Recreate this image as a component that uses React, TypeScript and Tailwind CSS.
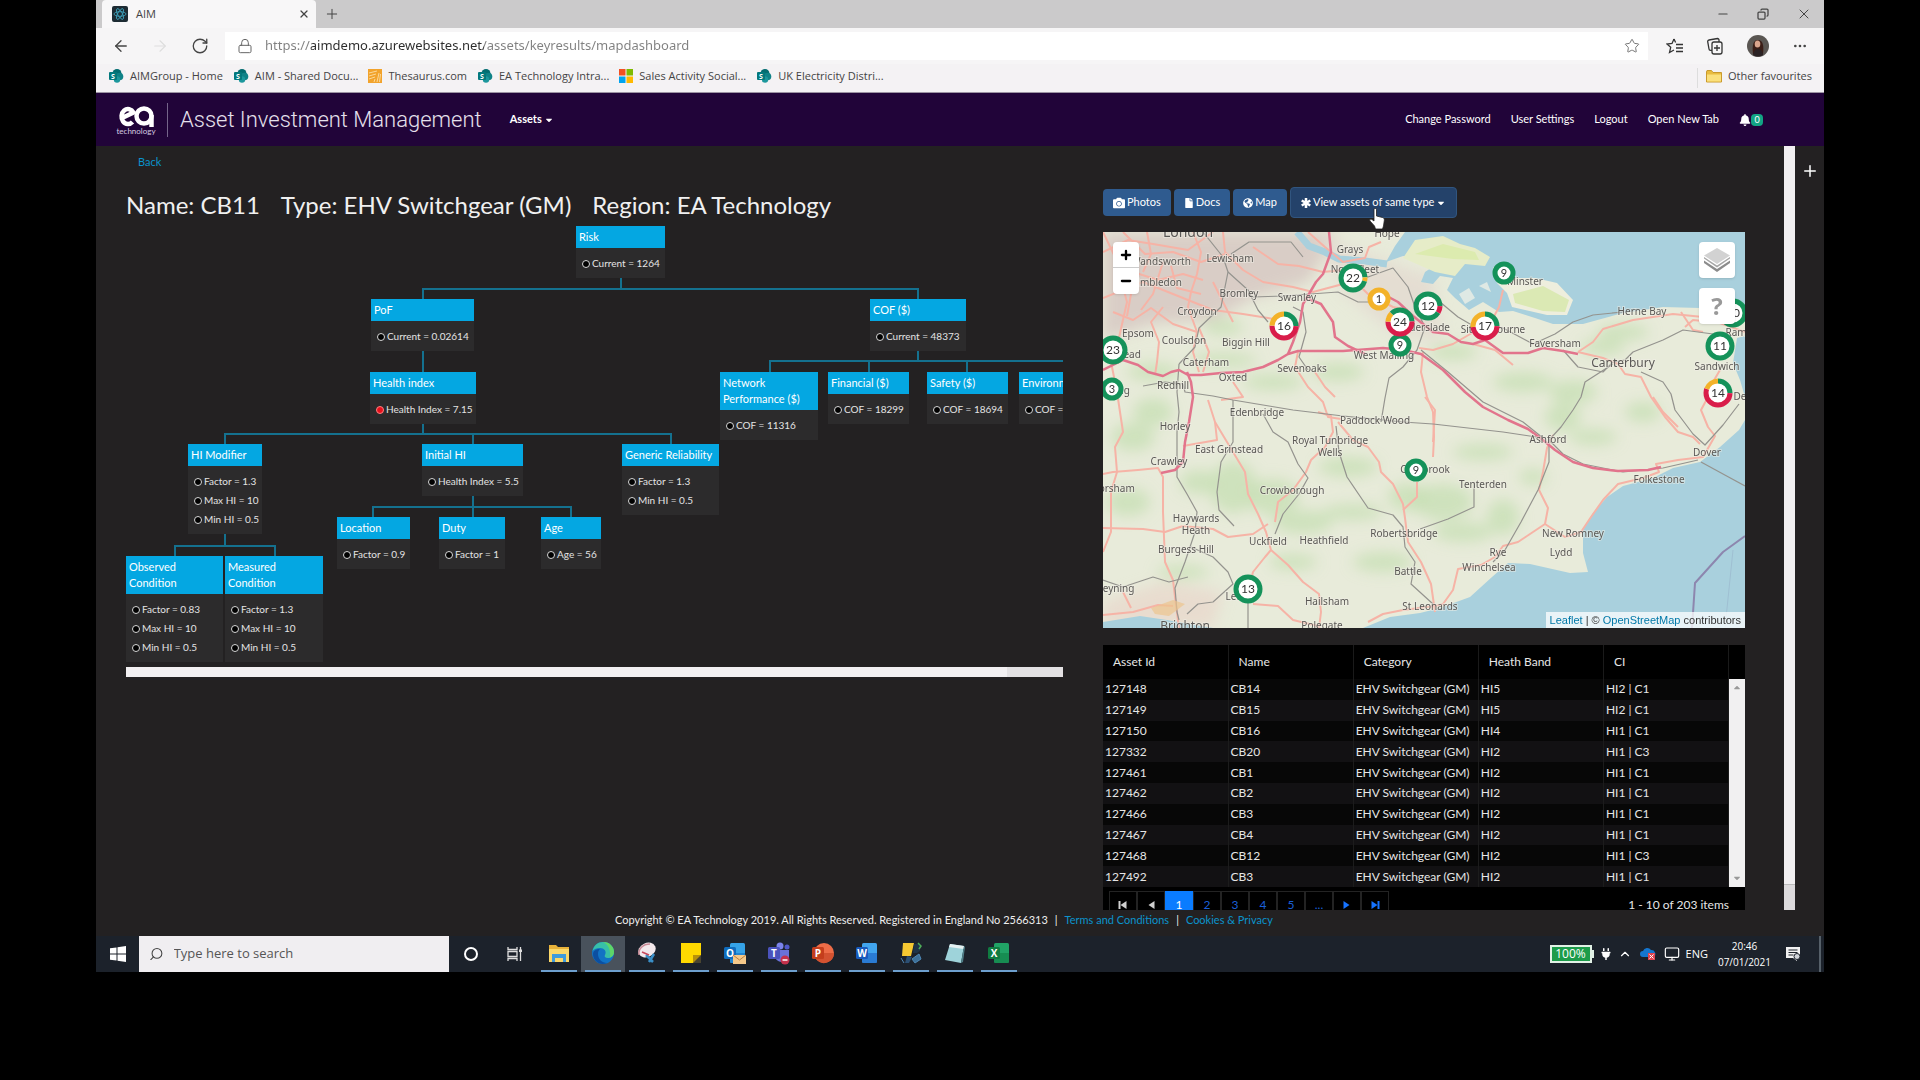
import type { ReactNode } from 'react';
import {
  ArrowLeft,
  ArrowRight,
  ChevronUp,
  Copy,
  Lock,
  Minus,
  Monitor,
  MoreHorizontal,
  Plus,
  RotateCw,
  Search,
  Star,
  X,
} from 'lucide-react';
import { FaBell, FaCamera, FaCaretDown, FaFile, FaGlobeAmericas, FaPlug } from 'react-icons/fa';

/* ---------- data ---------- */

type TreeNode = { title: string; x: number; y: number; w: number; rows: string[]; alert?: boolean };

const treeNodes: TreeNode[] = [
  { title: 'Risk', x: 450, y: 3, w: 89, rows: ['Current = 1264'] },
  { title: 'PoF', x: 245, y: 76, w: 103, rows: ['Current = 0.02614'] },
  { title: 'COF ($)', x: 744, y: 76, w: 96, rows: ['Current = 48373'] },
  { title: 'Health index', x: 244, y: 149, w: 106, rows: ['Health Index = 7.15'], alert: true },
  { title: 'Network Performance ($)', x: 594, y: 149, w: 98, rows: ['COF = 11316'] },
  { title: 'Financial ($)', x: 702, y: 149, w: 81, rows: ['COF = 18299'] },
  { title: 'Safety ($)', x: 801, y: 149, w: 81, rows: ['COF = 18694'] },
  { title: 'Environmental ($)', x: 893, y: 149, w: 104, rows: ['COF = 64'] },
  { title: 'HI Modifier', x: 62, y: 221, w: 74, rows: ['Factor = 1.3', 'Max HI = 10', 'Min HI = 0.5'] },
  { title: 'Initial HI', x: 296, y: 221, w: 101, rows: ['Health Index = 5.5'] },
  { title: 'Generic Reliability', x: 496, y: 221, w: 97, rows: ['Factor = 1.3', 'Min HI = 0.5'] },
  { title: 'Location', x: 211, y: 294, w: 73, rows: ['Factor = 0.9'] },
  { title: 'Duty', x: 313, y: 294, w: 66, rows: ['Factor = 1'] },
  { title: 'Age', x: 415, y: 294, w: 60, rows: ['Age = 56'] },
  { title: 'Observed Condition', x: 0, y: 333, w: 97, rows: ['Factor = 0.83', 'Max HI = 10', 'Min HI = 0.5'] },
  { title: 'Measured Condition', x: 99, y: 333, w: 98, rows: ['Factor = 1.3', 'Max HI = 10', 'Min HI = 0.5'] },
];

const treeLinks = [
  'M495 55V66M297 76V66H792V76',
  'M297 127V149',
  'M792 127V138M644 149V138H1000M743 138V149M841 138V149',
  'M297 200V211M99 221V211H545V221M347 211V221',
  'M347 273V294M247 294V284H445V294',
  'M99 311V323M49 333V323H149V333',
];

const assets = [
  ['127148', 'CB14', 'EHV Switchgear (GM)', 'HI5', 'HI2 | C1'],
  ['127149', 'CB15', 'EHV Switchgear (GM)', 'HI5', 'HI2 | C1'],
  ['127150', 'CB16', 'EHV Switchgear (GM)', 'HI4', 'HI1 | C1'],
  ['127332', 'CB20', 'EHV Switchgear (GM)', 'HI2', 'HI1 | C3'],
  ['127461', 'CB1', 'EHV Switchgear (GM)', 'HI2', 'HI1 | C1'],
  ['127462', 'CB2', 'EHV Switchgear (GM)', 'HI2', 'HI1 | C1'],
  ['127466', 'CB3', 'EHV Switchgear (GM)', 'HI2', 'HI1 | C1'],
  ['127467', 'CB4', 'EHV Switchgear (GM)', 'HI2', 'HI1 | C1'],
  ['127468', 'CB12', 'EHV Switchgear (GM)', 'HI2', 'HI1 | C3'],
  ['127492', 'CB3', 'EHV Switchgear (GM)', 'HI2', 'HI1 | C1'],
];

type Place = [name: string, x: number, y: number, size?: number];

const places: Place[] = [
  ['London', 85, 5, 14],
  ['Lewisham', 127, 30],
  ['Wandsworth', 58, 33],
  ['Wimbledon', 52, 54],
  ['Bromley', 136, 65],
  ['Swanley', 194, 69],
  ['Croydon', 94, 83],
  ['Epsom', 35, 105],
  ['Coulsdon', 81, 112],
  ['Biggin Hill', 143, 114],
  ['Leatherhead', 8, 126],
  ['Caterham', 103, 134],
  ['Oxted', 130, 149],
  ['Redhill', 70, 157],
  ['Dorking', 8, 162],
  ['Sevenoaks', 199, 140],
  ['West Malling', 281, 127],
  ['Grays', 247, 21],
  ['Northfleet', 252, 41],
  ['Hope', 284, 5],
  ['Walderslade', 318, 99],
  ['Minster', 422, 53],
  ['Sittingbourne', 390, 101],
  ['Faversham', 452, 115],
  ['Herne Bay', 539, 83],
  ['Canterbury', 520, 135, 12],
  ['Ramsgate', 646, 104],
  ['Sandwich', 614, 138],
  ['Deal', 641, 168],
  ['Edenbridge', 154, 184],
  ['Horley', 72, 198],
  ['East Grinstead', 126, 221],
  ['Crawley', 66, 233],
  ['Horsham', 10, 260],
  ['Paddock Wood', 272, 192],
  ['Royal Tunbridge', 227, 212],
  ['Wells', 227, 224],
  ['Cranbrook', 322, 241],
  ['Crowborough', 189, 262],
  ['Haywards', 93, 290],
  ['Heath', 93, 302],
  ['Uckfield', 165, 313],
  ['Heathfield', 221, 312],
  ['Burgess Hill', 83, 321],
  ['Robertsbridge', 301, 305],
  ['Battle', 305, 343],
  ['Steyning', 11, 360],
  ['Lewes', 137, 368],
  ['Hailsham', 224, 373],
  ['Polegate', 219, 397],
  ['Brighton', 82, 398, 12],
  ['St Leonards', 327, 378],
  ['Ashford', 445, 211],
  ['Tenterden', 380, 256],
  ['Dover', 604, 224],
  ['Folkestone', 556, 251],
  ['New Romney', 470, 305],
  ['Lydd', 458, 324],
  ['Rye', 395, 324],
  ['Winchelsea', 386, 339],
];

const GREEN = '#15925a';
const AMBER = '#f3b229';
const RED = '#d91d4a';

// share of each colour round the ring, clockwise from the top
type Slice = [color: string, share: number];
type Cluster = { n: string; x: number; y: number; r: number; ring: Slice[] };

const clusters: Cluster[] = [
  { n: '22', x: 250, y: 46, r: 15, ring: [[GREEN, 0.24], [AMBER, 0.05], [GREEN, 0.71]] },
  { n: '1', x: 276, y: 67, r: 12, ring: [[AMBER, 1]] },
  { n: '12', x: 325, y: 74, r: 15, ring: [[GREEN, 0.25], [RED, 0.09], [GREEN, 0.66]] },
  { n: '9', x: 297, y: 113, r: 12, ring: [[GREEN, 1]] },
  { n: '24', x: 297, y: 90, r: 15, ring: [[GREEN, 0.24], [RED, 0.51], [AMBER, 0.12], [GREEN, 0.13]] },
  { n: '16', x: 181, y: 94, r: 15, ring: [[GREEN, 0.25], [RED, 0.5], [AMBER, 0.25]] },
  { n: '23', x: 10, y: 118, r: 15, ring: [[GREEN, 1]] },
  { n: '3', x: 9, y: 157, r: 12, ring: [[GREEN, 1]] },
  { n: '9', x: 401, y: 41, r: 12, ring: [[GREEN, 1]] },
  { n: '17', x: 382, y: 94, r: 15, ring: [[GREEN, 0.25], [RED, 0.48], [AMBER, 0.27]] },
  { n: '10', x: 630, y: 81, r: 15, ring: [[GREEN, 1]] },
  { n: '11', x: 617, y: 114, r: 15, ring: [[GREEN, 1]] },
  { n: '14', x: 615, y: 161, r: 15, ring: [[GREEN, 0.25], [RED, 0.55], [AMBER, 0.2]] },
  { n: '13', x: 145, y: 357, r: 15, ring: [[GREEN, 1]] },
  { n: '9', x: 313, y: 238, r: 12, ring: [[GREEN, 1]] },
];

const motorways = [
  'M0 138L20 128L35 133L45 140L60 144L68 140L76 138L85 143L98 143L118 141L140 140L160 135L175 128L185 122L195 119L240 119L280 116L300 118L318 122L340 138L362 160L380 175L405 188L425 197L440 208L452 218L470 230L490 236L515 239L545 238L558 235',
  'M185 122L190 110L197 90L200 72L206 62L213 50L220 42L228 20L226 0',
  'M206 67L218 72L230 90L232 105L245 114L262 122',
  'M84 140L88 150L90 165L86 190L82 210L80 230L72 238L58 241',
  'M280 62L295 70L310 84L330 100L345 102L358 110L370 112L382 108L400 121L425 121L440 116L460 119L475 122',
];

const primaries = [
  'M0 242L10 240L35 238L55 236L60 245L60 280L62 330L70 348L72 365L76 396',
  'M0 0L12 25L24 70L15 110L8 130L14 160L20 200L12 215L14 240L8 260L8 300L0 320',
  'M0 296L40 297L62 300L80 294L110 297L125 305L150 302L165 292',
  'M105 168L112 190L114 208L80 214',
  'M112 190L130 220L142 240L145 262L155 282L163 300L168 318L185 333L200 350L216 362L218 380L216 396',
  'M172 290L175 270L190 258L203 240L208 228L222 215L230 200L228 184L215 180',
  'M195 120L192 135L205 155L220 170L225 185L238 187',
  'M235 190L250 208L265 215L276 230L278 240L290 252L300 272L302 286L305 310L318 330L328 352L332 380',
  'M314 250L314 265L300 278',
  'M320 120L318 140L324 165L330 180L331 205L330 225',
  'M0 66L40 50L80 66L110 78L140 82L165 86L176 88',
  'M60 75L48 90L56 110L54 130L52 143',
  'M90 0L98 20L94 42L88 60L85 75L94 100L90 120L96 140',
  'M120 0L122 20L140 38L160 50L190 55L210 60L240 52L262 55',
  'M150 15L175 32L196 34L220 40L240 38L265 62L290 75L305 78',
  'M205 0L222 15L240 30L262 26L266 15L278 10',
  'M0 20L25 8L50 12L85 18L110 0M20 0L42 22L70 20L98 30L122 22',
  'M30 40L55 48L80 42L100 48M60 30L50 62L38 78',
  'M10 80L30 88L48 76L70 92L94 100M68 34L74 56L98 62M110 50L118 66L130 90M12 48L28 62L24 84M44 0L48 22L40 40',
  'M400 58L396 75L388 90L350 112L330 118L316 116',
  'M475 120L490 110L500 97L530 88L570 82L600 85L642 100',
  'M475 120L500 126L515 132L522 142L538 145L548 165L562 185L575 200L590 205L597 212',
  'M582 95L590 88L610 90M578 80L590 98L600 100',
  'M617 138L610 150L605 165L598 178L605 195L612 204L600 225L575 228L553 232L556 240L540 246L515 252L500 268L488 285L478 300L462 305L442 292L430 300L415 310L400 314L392 325L378 333L355 337L350 358L340 372L332 374L300 378L280 382L265 390',
  'M550 165L560 180L575 195',
  'M450 203L444 216L440 240L436 258L445 276L442 292',
  'M330 210L332 178L322 165',
  'M150 372L175 374L190 388L215 394',
  'M145 360L150 340L162 325L168 318',
  'M0 383L30 380L55 373L70 374',
  'M20 360L28 376M100 140L106 120L96 96M130 150L140 165L118 168',
  'M212 140L222 155L232 165M370 112L392 118L410 133',
];

const railways = [
  'M76 132L74 160L76 180L74 200L74 245L84 262L94 280L92 300L82 330L72 356L74 380L76 388',
  'M88 315L110 325L125 340L130 352L110 370L95 372L84 382',
  'M40 154L62 150L80 152L82 160L110 164L130 168L190 178L240 184L300 190L330 192L400 200L440 206',
  'M130 168L130 210L118 230L114 260L116 278L131 294',
  'M160 182L170 200L185 210L195 232L205 246L196 262L180 282L172 302',
  'M233 194L236 220L244 245L265 276L290 283L300 295L302 315L312 330L308 352L330 372',
  'M100 0L120 25L125 40L118 75L96 96L92 115L76 132',
  'M125 40L145 58L155 78L165 90',
  'M128 22L146 10L188 10L200 25M150 65L180 64L235 60L255 70L280 70',
  'M240 42L265 45L290 36L305 55L312 75M190 75L200 80L203 100L196 125L205 138',
  'M312 75L322 95L314 118L300 135L286 146L282 166L278 190',
  'M337 70L355 85L367 92L400 96L430 112L452 102L470 90L490 83L520 80',
  'M460 118L475 135L500 140L510 130L522 128L530 120L560 108L580 98L610 102',
  'M510 132L482 150L478 165L470 178L458 195L446 208L446 230L435 258L418 290L402 318L390 330',
  'M538 140L560 150L568 162L572 178L590 202L602 213L620 193L636 172',
  'M446 208L460 222L480 232L520 240L560 236L595 228',
  'M371 250L371 275L345 287L317 297',
  'M440 206L420 190L380 170L345 140L318 118',
  'M145 365L145 396M0 348L20 355L50 345L66 350L85 345',
  'M598 230L620 242L642 254',
];

const woods: [number, number, number, number][] = [
  [120, 128, 34, 7],
  [170, 150, 30, 8],
  [50, 140, 26, 9],
  [235, 140, 26, 9],
  [420, 150, 30, 10],
  [470, 160, 24, 12],
  [520, 100, 26, 8],
  [500, 115, 22, 8],
  [130, 255, 24, 26],
  [170, 265, 26, 18],
  [95, 250, 18, 12],
  [245, 235, 30, 10],
  [305, 265, 20, 14],
  [340, 270, 30, 18],
  [360, 300, 30, 10],
  [280, 330, 30, 10],
  [400, 285, 16, 18],
  [25, 270, 22, 14],
  [50, 180, 20, 14],
  [350, 120, 24, 8],
  [460, 185, 18, 14],
  [540, 180, 18, 10],
  [430, 245, 14, 8],
  [190, 330, 24, 8],
  [80, 340, 26, 7],
  [250, 280, 30, 8],
  [30, 205, 22, 14],
  [200, 290, 30, 12],
  [380, 220, 30, 8],
  [120, 95, 20, 8],
  [490, 205, 24, 8],
];

const bookmarks: [string, 'sharepoint' | 'thesaurus' | 'microsoft'][] = [
  ['AIMGroup - Home', 'sharepoint'],
  ['AIM - Shared Docu...', 'sharepoint'],
  ['Thesaurus.com', 'thesaurus'],
  ['EA Technology Intra...', 'sharepoint'],
  ['Sales Activity Social...', 'microsoft'],
  ['UK Electricity Distri...', 'sharepoint'],
];

/* ---------- browser chrome ---------- */

function BookmarkIcon({ kind }: { kind: string }) {
  if (kind === 'microsoft') {
    return (
      <svg viewBox="0 0 14 14" className="size-3.5">
        <path fill="#f25022" d="M0 0h6.5v6.5H0z" />
        <path fill="#7fba00" d="M7.5 0H14v6.5H7.5z" />
        <path fill="#00a4ef" d="M0 7.5h6.5V14H0z" />
        <path fill="#ffb900" d="M7.5 7.5H14V14H7.5z" />
      </svg>
    );
  }
  if (kind === 'thesaurus') {
    return (
      <svg viewBox="0 0 14 14" className="size-3.5">
        <path fill="#f2a32c" d="M0 0h14v14H0z" />
        <path stroke="#fbd99a" fill="none" d="M1 4l8-2M1 7l7-2M1 10l6-2M9 13l2-9M11.500 13l1-8M6 13l1-3" />
      </svg>
    );
  }
  return (
    <svg viewBox="0 0 16 14" className="h-3.5 w-4">
      <circle cx="9" cy="4.500" r="4.500" fill="#036c70" />
      <circle cx="11.500" cy="7.500" r="3.800" fill="#0f8287" />
      <circle cx="9" cy="10.500" r="3.200" fill="#1c979c" />
      <rect x="1" y="3" width="8" height="8" rx="1" fill="#03787c" />
      <text x="5" y="9.500" fontSize="7" fontWeight="bold" fill="#fff" textAnchor="middle">
        S
      </text>
    </svg>
  );
}

function BrowserChrome() {
  return (
    <header className="font-['Open_Sans',sans-serif] text-[#444]">
      <div className="flex h-7 items-stretch justify-between bg-[#cbcacb]">
        <div className="flex items-center">
          <div className="ml-1.5 flex h-full w-[214px] items-center rounded-t bg-[#f8f7f8] pr-1.5 pl-2.5">
            <svg viewBox="0 0 16 16" className="size-4">
              <rect width="16" height="16" rx="2" fill="#1d2b33" />
              <g fill="none" stroke="#3fa9c4" strokeWidth=".8">
                <ellipse cx="8" cy="8" rx="6" ry="2.300" />
                <ellipse cx="8" cy="8" rx="6" ry="2.300" transform="rotate(60 8 8)" />
                <ellipse cx="8" cy="8" rx="6" ry="2.300" transform="rotate(120 8 8)" />
              </g>
            </svg>
            <span className="ml-2 flex-1 text-[11px]">AIM</span>
            <button aria-label="Close tab">
              <X className="size-3" strokeWidth={2.5} />
            </button>
          </div>
          <button aria-label="New tab" className="ml-2">
            <Plus className="size-4" strokeWidth={1.5} />
          </button>
        </div>
        <div className="flex items-center gap-[27px] pr-3">
          <button aria-label="Minimize">
            <Minus className="size-3.5" strokeWidth={2} />
          </button>
          <button aria-label="Restore">
            <Copy className="size-3 -scale-x-100" strokeWidth={2.5} />
          </button>
          <button aria-label="Close">
            <X className="size-4" strokeWidth={1.5} />
          </button>
        </div>
      </div>

      <div className="flex h-9 items-center bg-[#f6f5f6] px-4">
        <button aria-label="Back">
          <ArrowLeft className="size-[18px]" strokeWidth={1.75} />
        </button>
        <button aria-label="Forward" className="ml-[21px] text-[#ddd]">
          <ArrowRight className="size-[18px]" strokeWidth={1.5} />
        </button>
        <button aria-label="Refresh" className="ml-[22px]">
          <RotateCw className="size-[18px]" strokeWidth={1.75} />
        </button>
        <div className="ml-4 flex h-7 flex-1 items-center bg-white pr-2 pl-3">
          <Lock className="size-4 text-[#666]" strokeWidth={1.5} />
          <input
            aria-label="Address"
            defaultValue="https://aimdemo.azurewebsites.net/assets/keyresults/mapdashboard"
            className="ml-3 flex-1 bg-[linear-gradient(90deg,#808080_46px,#2c2c2c_46px,#2c2c2c_219px,#808080_219px)] bg-clip-text font-['Noto_Sans',sans-serif] text-[13px] text-transparent outline-none"
          />
          <Star className="size-4 text-[#777]" strokeWidth={1.5} />
        </div>
        <div className="ml-[18px] flex items-center gap-[22px]">
          <button aria-label="Favourites">
            <svg viewBox="0 0 18 16" className="h-4 w-[18px] fill-none stroke-[#333]" strokeWidth="1.300">
              <path d="M8 1L6 5.500 1 6l3.700 3.300L3.500 14.500 8 12M8 1l1.600 3.500" />
              <path d="M10 6.500h7M10 10h7M10 13.500h7" />
            </svg>
          </button>
          <button aria-label="Collections">
            <svg viewBox="0 0 18 18" className="size-[18px] fill-none stroke-[#333]" strokeWidth="1.300">
              <rect x="6" y="5" width="10" height="12" rx="2" />
              <path d="M13 5V3a1.500 1.500 0 00-1.500-1.500L3 3a1.500 1.500 0 00-1.300 1.700L3 12a1.500 1.500 0 001.500 1.400H6M11 8v6M8 11h6" />
            </svg>
          </button>
          <button aria-label="Profile">
            <svg viewBox="0 0 24 24" className="size-6">
              <circle cx="12" cy="12" r="11" fill="#5a5652" />
              <path d="M7 20c-1-8 0-14 5-14s6 6 5 14z" fill="#3a1d16" />
              <ellipse cx="11.500" cy="10" rx="2.800" ry="3.600" fill="#d9a48c" />
              <path d="M7 21c1-5 3-6 5-6s5 2 5 6c-3 2-7 2-10 0z" fill="#2a2224" />
            </svg>
          </button>
          <button aria-label="Settings and more">
            <MoreHorizontal className="size-4" strokeWidth={2} />
          </button>
        </div>
      </div>

      <div className="flex h-7 items-center justify-between bg-[#f4f2f4] px-3 text-[11px] leading-4">
        <nav className="flex items-center gap-2.5 pb-1">
          {bookmarks.map(([label, kind]) => (
            <a key={label} href="#" className="flex items-center gap-1.5">
              <BookmarkIcon kind={kind} />
              {label}
            </a>
          ))}
        </nav>
        <button className="flex items-center gap-1.5 border-l border-[#ddd] pb-1 pl-2">
          <svg viewBox="0 0 16 13" className="h-[13px] w-4">
            <path d="M.5 2V12h15V2.500H7L5.500.5H1z" fill="#e9bc3f" stroke="#c99a2e" />
            <path d="M1 4.500h14V11.500H1z" fill="#fbe07c" />
          </svg>
          Other favourites
        </button>
      </div>
    </header>
  );
}

/* ---------- application ---------- */

function AppHeader() {
  return (
    <div className="flex h-[54px] items-center justify-between border-t border-[#9c94a3] bg-[#210439] pr-[61px] pl-[22px] text-[11px] text-white">
      <div className="flex items-center">
        <a href="#" aria-label="EA Technology" className="flex w-9 flex-col items-center">
          <svg viewBox="0 0 36 22" className="h-[22px] w-9 fill-none stroke-white" strokeWidth="4.500">
            <path d="M3 13.500L15.500 7.500A6.500 7.500 0 1 0 14.500 17" />
            <circle cx="26" cy="11" r="7.500" />
            <path d="M33.500 10V22" />
          </svg>
          <span className="text-[8px] leading-[8px] text-[#d5cbe0]">technology</span>
        </a>
        <span className="ml-[13px] h-[34px] w-px bg-[#75658a]" />
        <h1 className="ml-3 font-['Roboto',sans-serif] text-[22px] font-light text-[#e6e0ec]">
          Asset Investment Management
        </h1>
        <button className="ml-7 flex items-center gap-0.5 font-bold">
          Assets <FaCaretDown className="size-2.5" />
        </button>
      </div>
      <nav className="flex items-center gap-5">
        <a href="#">Change Password</a>
        <a href="#">User Settings</a>
        <a href="#">Logout</a>
        <a href="#">Open New Tab</a>
        <a href="#" className="flex items-center" aria-label="Notifications">
          <FaBell className="size-3" />
          <span className="flex h-3 w-3 items-center justify-center rounded-sm bg-[#12a584] text-[9px] leading-3">
            0
          </span>
        </a>
      </nav>
    </div>
  );
}

function NodeCard({ node }: { node: TreeNode }) {
  return (
    <div className="absolute text-[#e4e4e4]" style={{ left: node.x, top: node.y, width: node.w }}>
      <div className="bg-[#04a7e2] py-[3px] pl-[3px] text-[11px] leading-4 text-white">{node.title}</div>
      <ul className="bg-[#2c2b2c] pt-1.5 pb-[5px] pl-1.5 text-[10px]">
        {node.rows.map((row) => (
          <li key={row} className="flex h-[19px] items-center gap-0.5 whitespace-nowrap">
            <span
              className={`size-2 shrink-0 rounded-full border ${
                node.alert ? 'border-[#ff8080] bg-[#e8101c]' : 'border-[#d8d8d8] bg-black'
              }`}
            />
            {row}
          </li>
        ))}
      </ul>
    </div>
  );
}

function AssetTree() {
  return (
    <section>
      <div className="relative h-[444px] overflow-hidden">
        <svg className="absolute top-0 left-0 h-full w-full fill-none stroke-[#14718f]" strokeWidth="2">
          {treeLinks.map((d) => (
            <path key={d} d={d} />
          ))}
        </svg>
        {treeNodes.map((node) => (
          <NodeCard key={node.title} node={node} />
        ))}
      </div>
      <div className="h-2.5 bg-[#e3e1e3]">
        <div className="h-full w-[94%] bg-[#f2f0f2]" />
      </div>
    </section>
  );
}

function ClusterMarker({ n, x, y, r, ring }: Cluster) {
  const mid = r - 3;
  const length = 2 * Math.PI * mid;
  let start = 0;
  return (
    <g>
      <circle cx={x} cy={y} r={r - 1} fill="#fff" />
      {ring.map(([color, share], i) => {
        const offset = start;
        start += share;
        return (
          <circle
            key={i}
            cx={x}
            cy={y}
            r={mid}
            fill="none"
            stroke={color}
            strokeWidth="5"
            strokeDasharray={`${share * length} ${length}`}
            strokeDashoffset={-offset * length}
            transform={`rotate(-90 ${x} ${y})`}
          />
        );
      })}
      <text x={x} y={y + 4} textAnchor="middle" fontSize={r > 12 ? 12 : 11} fill="#333">
        {n}
      </text>
    </g>
  );
}

function MapView() {
  return (
    <div className="relative mt-3.5 h-[396px] overflow-hidden">
      <svg
        viewBox="0 0 642 396"
        preserveAspectRatio="xMidYMid slice"
        className="h-full w-full font-['Lato',sans-serif]">
        <rect width="642" height="396" fill="#e8ebda" />
        <defs>
          <filter id="soft" x="-20%" y="-20%" width="140%" height="140%">
            <feGaussianBlur stdDeviation="7" />
          </filter>
        </defs>
        <g filter="url(#soft)">
          <path d="M0 0H235L205 50 150 66 110 88 50 92 0 108z" fill="#d9cdc6" />
          <path d="M215 5L330 45 340 110 290 100 240 60z" fill="#e4ddd2" />
          {woods.map(([cx, cy, rx, ry]) => (
            <ellipse key={`${cx}-${cy}`} cx={cx} cy={cy} rx={rx} ry={ry} fill="#c3deb0" opacity=".7" />
          ))}
          <path d="M0 370L60 350 120 360 110 396 0 396z" fill="#e8dccf" />
        </g>

        {/* sea, estuary and coast */}
        <g fill="#a9d0dd">
          <path d="M283 30L292 14 302 0H642V73L597 76 560 75 520 81 480 92 450 92 432 86 410 79 396 80 380 70 366 78 352 66 344 58 350 46 337 44 330 52 318 50 322 40 337 30 320 26 300 24z" />
          <path d="M642 104L634 106 630 131 637 148 642 165V188L636 198 617 215 597 230 570 236 550 246 520 254 504 265 490 281 480 298 480 321 485 340 467 341 427 332 405 331 389 345 367 365 337 376 317 381 287 385 260 396H642z" />
          <path d="M0 390L37 384 64 388 110 396H0z" />
        </g>
        <path d="M194 0L206 14 222 20 236 27 262 29 284 32" fill="none" stroke="#a9d0dd" strokeWidth="7" />
        <path d="M300 26L312 8 340 4 357 12 372 16 387 25 382 34 362 32 352 44 332 40z" fill="#e6ecc8" />
        <path d="M312 22L340 12 372 20 376 28 350 27z" fill="#dcebaf" />
        <path d="M390 35L407 46 432 46 454 51 470 68 464 83 444 83 409 75 404 61 394 51z" fill="#eeeedd" />
        <path d="M410 62L440 54 466 68 462 80 440 79 412 71z" fill="#dbe9b4" />
        <path d="M356 62L366 56 372 66 362 72zM376 54L384 50 388 60z" fill="#dfe9e4" />

        <g fill="none" strokeLinejoin="round">
          <g stroke="#f6b3a6" strokeWidth="2">
            {primaries.map((d) => (
              <path key={d} d={d} />
            ))}
          </g>
          <g stroke="#94938e" strokeWidth="1.200">
            {railways.map((d) => (
              <path key={d} d={d} />
            ))}
          </g>
          <g stroke="#e2748c" strokeWidth="2.500">
            {motorways.map((d) => (
              <path key={d} d={d} />
            ))}
          </g>
          <path d="M642 304L620 320 592 351 589 396" stroke="#8d86ae" strokeWidth="2" />
          <path d="M630 318L622 396" stroke="#9fbfd2" />
        </g>
        <path d="M48 376L70 368 82 372 66 384 52 382z" fill="#ecc48e" opacity=".7" />

        <g
          textAnchor="middle"
          fill="#5a5855"
          stroke="#f2f0e8"
          strokeWidth="2"
          strokeOpacity=".5"
          paintOrder="stroke"
          className="font-['Noto_Sans',sans-serif]">
          {places.map(([name, x, y, size = 10]) => (
            <text key={name} x={x} y={y} fontSize={size}>
              {name}
            </text>
          ))}
        </g>
        {clusters.map((c) => (
          <ClusterMarker key={`${c.x}-${c.y}`} {...c} />
        ))}
      </svg>

      <div className="absolute top-2.5 left-2.5 flex w-[26px] flex-col rounded bg-white text-black shadow">
        <button aria-label="Zoom in" className="flex h-[26px] items-center justify-center border-b border-[#ccc]">
          <Plus className="size-3.5" strokeWidth={4} />
        </button>
        <button aria-label="Zoom out" className="flex h-[26px] items-center justify-center">
          <Minus className="size-3.5" strokeWidth={4} />
        </button>
      </div>
      <div className="absolute top-2.5 right-2.5 flex flex-col gap-2.5">
        <button aria-label="Layers" className="flex size-9 items-center justify-center rounded bg-white shadow">
          <svg viewBox="0 0 26 26" className="size-[26px]">
            <path d="M13 25L0 16V13.500L13 22 26 13.500V16z" fill="#8c8c8c" />
            <path d="M13 20.500L0 11.500V10L13 18.500 26 10V11.500z" fill="#a6a6a6" />
            <path d="M13 17L0 8.500 13 1l13 7.500z" fill="#d2d2d2" />
          </svg>
        </button>
        <button className="flex size-9 items-center justify-center rounded bg-white font-['Open_Sans',sans-serif] text-2xl font-bold text-[#999] shadow">
          ?
        </button>
      </div>
      <div className="absolute right-0 bottom-0 bg-white/75 px-1 font-['Liberation_Sans',sans-serif] text-[11px] leading-4 text-[#333]">
        <a href="#" className="text-[#0078a8]">
          Leaflet
        </a>{' '}
        | ©{' '}
        <a href="#" className="text-[#0078a8]">
          OpenStreetMap
        </a>{' '}
        contributors
      </div>
    </div>
  );
}

function Toolbar() {
  const buttonStyle =
    'flex h-[27px] items-center gap-0.5 rounded-sm bg-[#2f5b8f] px-2.5 text-[11px] text-white';

  return (
    <div className="flex h-[31px] items-center gap-[3px]">
      <button className={buttonStyle}>
        <FaCamera className="size-3" /> Photos
      </button>
      <button className={buttonStyle}>
        <FaFile className="size-2.5" /> Docs
      </button>
      <button className={buttonStyle}>
        <FaGlobeAmericas className="size-2.5" /> Map
      </button>
      <div className="relative">
        <button className="flex h-[31px] items-center gap-0.5 rounded-sm border border-[#31557f] bg-[#24426a] px-2.5 text-[11px] text-white">
          <svg viewBox="0 0 10 10" className="size-2.5 stroke-white" strokeWidth="2.500">
            <path d="M5 0V10M0.700 2.500L9.300 7.500M0.700 7.500L9.300 2.500" />
          </svg>
          View assets of same type <FaCaretDown className="size-2.5" />
        </button>
        <svg viewBox="0 0 16 22" className="absolute top-[21px] left-[79px] h-[22px] w-4">
          <path
            d="M5 1.500c0-1.500 2.500-1.500 2.500 0V8l6 1.500c1.500.4 2 1.500 1.800 3L14.500 18l-1 3h-7L5.500 18 1 13c-1-1.500.7-2.600 2-1.500l2 1.500z"
            fill="#fff"
            stroke="#222"
            strokeWidth=".8"
          />
        </svg>
      </div>
    </div>
  );
}

function AssetGrid() {
  const pageStyle = 'flex h-7 w-7 items-center justify-center border border-[#232323] text-[#1a5fd6]';

  return (
    <div className="mt-[17px] bg-black text-xs text-[#e6e6e6]">
      <div className="flex">
        <table className="h-[242px] w-full flex-1 table-fixed border-collapse">
          <thead>
            <tr className="h-[34px]">
              {['Asset Id', 'Name', 'Category', 'Heath Band', 'CI'].map((title) => (
                <th key={title} className="border-r border-[#1a1a1a] pl-2.5 text-left font-normal">
                  {title}
                </th>
              ))}
            </tr>
          </thead>
          <tbody>
            {assets.map((asset, i) => (
              <tr key={asset[0]} className={i % 2 ? 'bg-[#121113]' : 'bg-[#070707]'}>
                {asset.map((cell, j) => (
                  <td key={j} className="border-r border-[#1c1c1c] p-0 pl-0.5 leading-5 whitespace-nowrap">
                    {cell}
                  </td>
                ))}
              </tr>
            ))}
          </tbody>
        </table>
        <div className="mt-[34px] flex w-4 flex-col items-center justify-between bg-[#f1f0f1] py-1 text-[#999]">
          <FaCaretDown className="size-2.5 rotate-180" />
          <FaCaretDown className="size-2.5" />
        </div>
      </div>
      <div className="flex items-center justify-between pt-1 pr-4 pl-1.5">
        <div className="flex">
          <button aria-label="First page" className={pageStyle}>
            <PagerArrow end flip />
          </button>
          <button aria-label="Previous page" className={pageStyle}>
            <PagerArrow flip />
          </button>
          <button className="flex h-7 w-7 items-center justify-center bg-[#0a7cff] text-white">1</button>
          {['2', '3', '4', '5', '...'].map((page) => (
            <button key={page} className={pageStyle}>
              {page}
            </button>
          ))}
          <button aria-label="Next page" className={pageStyle}>
            <PagerArrow />
          </button>
          <button aria-label="Last page" className={pageStyle}>
            <PagerArrow end />
          </button>
        </div>
        <span>1 - 10 of 203 items</span>
      </div>
    </div>
  );
}

function PagerArrow({ end, flip }: { end?: boolean; flip?: boolean }) {
  return (
    <svg
      viewBox="0 0 10 10"
      className={`size-2.5 ${flip ? '-scale-x-100 fill-[#cfcfcf]' : 'fill-[#1673ff]'}`}>
      <path d="M1.500 1L7.500 5 1.500 9z" />
      {end && <path d="M7.500 1H9.500V9H7.500z" />}
    </svg>
  );
}

function Dashboard() {
  return (
    <main className="flex min-h-0 flex-1 overflow-hidden">
      <div className="flex-1 overflow-hidden pt-[7px] pr-[39px] pl-[30px]">
        <a href="#" className="ml-3 block h-[18px] text-[11px] leading-[18px] text-[#0b93cc]">
          Back
        </a>
        <div className="mt-4 grid grid-cols-[937fr_642fr] gap-10">
          <div className="min-w-0">
            <h2 className="flex gap-[21px] text-2xl leading-9 text-[#f0f0f0]">
              <span>Name: CB11</span>
              <span>Type: EHV Switchgear (GM)</span>
              <span>Region: EA Technology</span>
            </h2>
            <AssetTree />
          </div>
          <div className="min-w-0">
            <Toolbar />
            <MapView />
            <AssetGrid />
          </div>
        </div>
      </div>
      <div className="flex w-[11px] flex-col bg-[#f1eff1]">
        <div className="mt-auto h-[26px] border-t border-[#bbb] bg-[#dcdadc]" />
      </div>
      <div className="flex w-[29px] justify-center pt-4">
        <button aria-label="Add panel" className="h-[18px] text-white">
          <Plus className="size-[18px]" strokeWidth={2} />
        </button>
      </div>
    </main>
  );
}

function Footer() {
  return (
    <footer className="flex h-[26px] justify-center gap-[7px] pr-8 text-[11px] leading-5 text-[#eee]">
      <span>Copyright © EA Technology 2019. All Rights Reserved. Registered in England No 2566313</span>
      <span>|</span>
      <a href="#" className="text-[#0b93cc]">
        Terms and Conditions
      </a>
      <span>|</span>
      <a href="#" className="text-[#0b93cc]">
        Cookies &amp; Privacy
      </a>
    </footer>
  );
}

/* ---------- windows taskbar ---------- */

function OfficeIcon({ letter, dark, light, children }: { letter: string; dark: string; light: string; children?: ReactNode }) {
  return (
    <svg viewBox="0 0 24 24" className="size-6 font-['Open_Sans',sans-serif]">
      <rect x="7" y="2" width="15" height="20" rx="1.500" fill={light} />
      <path d="M7 12h15v8.500a1.500 1.500 0 01-1.500 1.500h-12A1.500 1.500 0 017 20.500z" fill={dark} opacity=".55" />
      <rect x="1" y="6" width="12" height="12" rx="1.500" fill={dark} />
      <text x="7" y="15.500" fontSize="10" fontWeight="bold" fill="#fff" textAnchor="middle">
        {letter}
      </text>
      {children}
    </svg>
  );
}

const taskbarApps: { name: string; icon: ReactNode }[] = [
  {
    name: 'File Explorer',
    icon: (
      <svg viewBox="0 0 24 24" className="size-6">
        <path d="M2 4h7l2 2h11v15H2z" fill="#e8b23a" />
        <path d="M2 8h20v13H2z" fill="#fbd869" />
        <path d="M5 13h14v8h-3v-4H8v4H5z" fill="#3f9bdc" />
      </svg>
    ),
  },
  {
    name: 'Microsoft Edge',
    icon: (
      <svg viewBox="0 0 24 24" className="size-6">
        <circle cx="12" cy="12" r="11" fill="#1273c4" />
        <path d="M1.500 10C3 4 7 1 12 1c7 0 11 5 11 10 0 4-3 6-6 6-3 0-4-1.500-3-3 2-4-1-7-5-7-3 0-6 1-7.500 3z" fill="#38bfa8" />
        <path d="M12 1c7 0 11 5 11 10 0 3-2 5-4 5.500C20 9 17 3 12 1z" fill="#5fd668" />
        <path d="M7 13c0 5 4 9 9 9-7 3-14-2-14-9 0-3 3-5 7-5-1.500 1-2 3-2 5z" fill="#0c4fa0" />
      </svg>
    ),
  },
  {
    name: 'Snip & Sketch',
    icon: (
      <svg viewBox="0 0 24 24" className="size-6">
        <ellipse cx="12" cy="9" rx="9" ry="7" fill="#f3e9ec" transform="rotate(-25 12 9)" />
        <path d="M4 14C3 8 8 3 15 3" fill="none" stroke="#c98a96" strokeWidth="1.500" />
        <path d="M11 14l7 7M19 13l-5 8" stroke="#3a8fc8" strokeWidth="2.500" />
        <path d="M7 11l7 3" stroke="#c8485c" strokeWidth="1.500" />
      </svg>
    ),
  },
  {
    name: 'Sticky Notes',
    icon: (
      <svg viewBox="0 0 24 24" className="size-6">
        <path d="M2 2h20v12l-8 8H2z" fill="#ffd900" />
        <path d="M14 22v-8h8v8z" fill="#4a4530" />
        <path d="M14 22v-8h8z" fill="#b8920a" />
      </svg>
    ),
  },
  {
    name: 'Outlook',
    icon: (
      <OfficeIcon letter="O" dark="#0f6cbd" light="#35a3e8">
        <path d="M10 14h13v9H10z" fill="#f5c98a" />
        <path d="M10 14l6.500 5 6.500-5" fill="none" stroke="#b98242" />
      </OfficeIcon>
    ),
  },
  {
    name: 'Teams',
    icon: (
      <svg viewBox="0 0 24 24" className="size-6 font-['Open_Sans',sans-serif]">
        <circle cx="13" cy="5" r="3.500" fill="#7b83eb" />
        <circle cx="20" cy="6" r="2.500" fill="#5059c9" />
        <path d="M8 9h14v7c0 3-2 5-6 5s-8-2-8-6z" fill="#6a71d8" />
        <rect x="1" y="6" width="12" height="12" rx="1.500" fill="#4b53bc" />
        <text x="7" y="15.500" fontSize="10" fontWeight="bold" fill="#fff" textAnchor="middle">
          T
        </text>
        <circle cx="18" cy="19" r="4.500" fill="#c4314b" />
        <path d="M15.500 19h5" stroke="#fff" strokeWidth="1.500" />
      </svg>
    ),
  },
  {
    name: 'PowerPoint',
    icon: (
      <svg viewBox="0 0 24 24" className="size-6 font-['Open_Sans',sans-serif]">
        <circle cx="13" cy="12" r="10" fill="#ed6c47" />
        <path d="M13 12h10a10 10 0 01-18 6z" fill="#d35230" />
        <rect x="1" y="6" width="12" height="12" rx="1.500" fill="#c43e1c" />
        <text x="7" y="15.500" fontSize="10" fontWeight="bold" fill="#fff" textAnchor="middle">
          P
        </text>
      </svg>
    ),
  },
  { name: 'Word', icon: <OfficeIcon letter="W" dark="#185abd" light="#41a5ee" /> },
  {
    name: 'PuTTY',
    icon: (
      <svg viewBox="0 0 24 24" className="size-6">
        <path d="M4 2h11l-3 13H3z" fill="#f6c832" />
        <path d="M15 3h6v7l-3 2h-4z" fill="#1f3448" />
        <path d="M19 2l3 3-2 3" fill="none" stroke="#4fae5a" strokeWidth="1.500" />
        <path d="M2 17l3 5M20 13l2 5-6 4-3-4z" fill="#3d7098" stroke="#4d87b5" />
        <path d="M8 15l5 1-3 6H6z" fill="#2b4f73" />
      </svg>
    ),
  },
  {
    name: 'Notepad',
    icon: (
      <svg viewBox="0 0 24 24" className="size-6">
        <path d="M7 3l14 2-3 17L2 19z" fill="#9ed3da" />
        <path d="M7 3l14 2-.5 3L6 6z" fill="#e6f1f2" />
        <path d="M18 22l3-17 1 1-2 15z" fill="#4f7f88" />
      </svg>
    ),
  },
  { name: 'Excel', icon: <OfficeIcon letter="X" dark="#107c41" light="#21a366" /> },
];

function Taskbar() {
  return (
    <div className="flex h-9 items-stretch justify-between bg-[#1c222b] font-['Open_Sans',sans-serif] text-white">
      <div className="flex items-stretch">
        <button aria-label="Start" className="flex w-[43px] items-center justify-center">
          <svg viewBox="0 0 16 16" className="size-4 fill-white">
            <path d="M0 2.300L6.500 1.400V7.600H0zM7.500 1.200L16 0V7.600H7.500zM0 8.500H6.500V14.600L0 13.700zM7.500 8.500H16V16L7.500 14.800z" />
          </svg>
        </button>
        <label className="flex w-[310px] items-center gap-2.5 bg-[#f0eef1] pl-2.5 text-[#444]">
          <Search className="size-4 -scale-x-100" strokeWidth={1.75} />
          <input
            aria-label="Type here to search"
            placeholder="Type here to search"
            className="w-full text-[13px] outline-none placeholder:text-[#555]"
          />
        </label>
        <button aria-label="Cortana" className="flex w-11 items-center justify-center">
          <span className="size-3.5 rounded-full border-2 border-white" />
        </button>
        <button aria-label="Task view" className="flex w-11 items-center justify-center">
          <svg viewBox="0 0 16 16" className="size-4 fill-none stroke-[#ddd]" strokeWidth="1.300">
            <path d="M1 1v2.500h9V1M1 15v-2.500h9V15M1 5.500h9v5H1zM13.500 1v14" />
            <path d="M12 3.500h3v2.500h-3z" fill="#ddd" stroke="none" />
          </svg>
        </button>
        {taskbarApps.map(({ name, icon }) => (
          <button
            key={name}
            aria-label={name}
            className={`flex w-11 flex-col items-center ${name === 'Microsoft Edge' ? 'bg-[#49525c]' : ''}`}>
            <span className="flex flex-1 items-center">{icon}</span>
            <span className="h-0.5 w-9 bg-[#6d9fce]" />
          </button>
        ))}
      </div>
      <div className="flex items-center text-[10px]">
        <span className="flex h-[18px] w-[42px] items-center justify-center border-2 border-[#e2f2e6] bg-[#1c9c4a] text-[12px] leading-3">
          100%
        </span>
        <span className="h-2 w-0.5 bg-[#e2f2e6]" />
        <FaPlug className="ml-1.5 size-3" />
        <ChevronUp className="ml-1.5 size-3.5" strokeWidth={2} />
        <svg viewBox="0 0 16 14" className="ml-2 h-3.5 w-4">
          <path d="M3 10a3 3 0 010-6 4.500 4.500 0 018-1 4 4 0 013 7z" fill="#1476cf" />
          <rect x="8" y="6" width="7" height="7" fill="#e0444f" />
          <path d="M9.500 7.500l4 4M13.500 7.500l-4 4" stroke="#fff" />
        </svg>
        <Monitor className="ml-2 size-4" strokeWidth={1.75} />
        <span className="ml-1.5 text-[11px]">ENG</span>
        <div className="ml-2.5 text-center leading-4">
          <div>20:46</div>
          <div>07/01/2021</div>
        </div>
        <svg viewBox="0 0 16 16" className="ml-3.5 size-4">
          <path d="M1 1h14v11h-3v3l-4-3H1z" fill="#f2f2f2" />
          <path d="M3.500 4h9M3.500 6.500h9M3.500 9h5" stroke="#1c222b" />
          <circle cx="12" cy="10.500" r="3" fill="#cfd3d8" stroke="#1c222b" />
        </svg>
        <span className="ml-[18px] h-full w-0.5 bg-[#566069]" />
        <span className="w-[3px]" />
      </div>
    </div>
  );
}

export default function App() {
  return (
    <div className="min-h-screen bg-black">
      <div className="mx-24 flex h-[90vh] flex-col bg-[#232122] font-['Lato',sans-serif]">
        <BrowserChrome />
        <AppHeader />
        <Dashboard />
        <Footer />
        <Taskbar />
      </div>
    </div>
  );
}
